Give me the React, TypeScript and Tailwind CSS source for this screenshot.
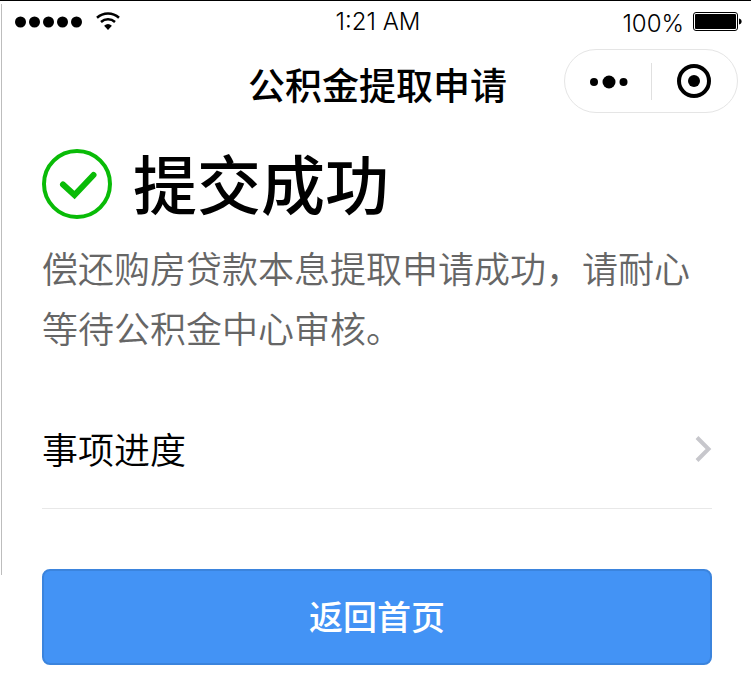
function SignalDots() {
  return (
    <svg width="68" height="12" viewBox="0 0 68 12" aria-hidden="true">
      {[5.5, 19.5, 33.5, 47.5, 61.5].map((cx) => (
        <circle key={cx} cx={cx} cy="6" r="5.5" />
      ))}
    </svg>
  );
}

function WifiIcon() {
  return (
    <svg width="24" height="20" viewBox="0 0 24 20" fill="none" stroke="#000" strokeWidth="2.5" aria-hidden="true">
      <path d="M1 5.7A16.5 16.5 0 0 1 23 5.7" />
      <path d="M5 10A10.5 10.5 0 0 1 19 10" />
      <path d="M12 18L8.1 13.7A6 6 0 0 1 15.9 13.7Z" fill="#000" stroke="none" />
    </svg>
  );
}

function BatteryIcon() {
  return (
    <svg width="50" height="20" viewBox="0 0 50 20" aria-hidden="true">
      <rect x="0.5" y="0.5" width="44" height="18" rx="2.5" fill="none" stroke="#000" />
      <rect x="2" y="2" width="41" height="15" rx="1" />
      <path d="M46 6.5C49.5 7 49.5 12 46 12.5Z" />
    </svg>
  );
}

function StatusBar() {
  return (
    <div className="grid h-[49px] grid-cols-[1fr_auto_1fr] items-start border-t border-black pr-2 pl-[13px] pt-[5px] font-['Inter',sans-serif] text-[24px] leading-8 font-light">
      <div className="flex h-8 items-center gap-[13px] pl-0.5">
        <SignalDots />
        <WifiIcon />
      </div>
      <span>1:21 AM</span>
      <div className="flex h-8 items-center justify-end gap-[9px]">
        <span className="pt-1">100%</span>
        <BatteryIcon />
      </div>
    </div>
  );
}

function Header() {
  return (
    <header className="grid grid-cols-[1fr_auto_1fr] items-center pr-[13px] pl-[17px]">
      <span />
      <h1 className="pt-1.5 text-[37px] leading-[56px] font-medium">公积金提取申请</h1>
      <div className="flex h-16 w-[174px] items-center justify-self-end rounded-full border border-[#e5e5e5]">
        <button type="button" aria-label="更多" className="flex flex-1 justify-center pt-0.5">
          <svg width="40" height="14" viewBox="0 0 40 14">
            <circle cx="6" cy="7" r="4" />
            <circle cx="21" cy="7" r="6.5" />
            <circle cx="35.5" cy="7" r="4" />
          </svg>
        </button>
        <span className="h-[37px] w-px bg-[#e0e0e0]" />
        <button type="button" aria-label="关闭" className="flex flex-1 justify-center">
          <svg width="34" height="34" viewBox="0 0 34 34">
            <circle cx="17" cy="17" r="15" fill="none" stroke="#000" strokeWidth="4" />
            <circle cx="17" cy="17" r="6" />
          </svg>
        </button>
      </div>
    </header>
  );
}

function App() {
  return (
    <div className="relative bg-white font-['Noto_Sans_CJK_SC',sans-serif] text-black">
      <StatusBar />
      <Header />

      <main className="pr-[39px] pb-4 pl-[42px]">
        <div className="flex h-[124px] items-center gap-[21px] pt-[18px]">
          <svg width="70" height="70" viewBox="0 0 70 70" fill="none" stroke="#09bb07" aria-hidden="true">
            <circle cx="35" cy="35" r="33" strokeWidth="4" />
            <path d="M21 35.5L32.5 46L51.5 26" strokeWidth="6" strokeLinecap="round" />
          </svg>
          <h2 className="pb-1.5 text-[64px] leading-[80px] font-medium">提交成功</h2>
        </div>

        <p className="text-[36px] leading-[60px] font-[350] text-[#666666]">
          偿还购房贷款本息提取申请成功，请耐心等待公积金中心审核。
        </p>

        <a href="#progress" className="mt-8 flex h-[120px] items-center justify-between border-b border-[#e8e8e8]">
          <span className="pb-0.5 text-[36px] leading-[60px] font-[350]">事项进度</span>
          <svg width="17" height="26" viewBox="0 0 17 26" fill="none" stroke="#c7c7cc" strokeWidth="4" aria-hidden="true">
            <path d="M2 1.5L13.5 13L2 24.5" />
          </svg>
        </a>

        <button
          type="button"
          className="mt-[60px] h-24 w-full rounded-lg border-2 border-[#3b84dd] bg-[#4393f5] pb-0.5 text-[34px] leading-[60px] font-medium text-white"
        >
          返回首页
        </button>
      </main>

      {/* screen edge */}
      <span className="absolute top-1 left-px h-[571px] w-px bg-[#bdbdbd]" />
    </div>
  );
}

export default App;
